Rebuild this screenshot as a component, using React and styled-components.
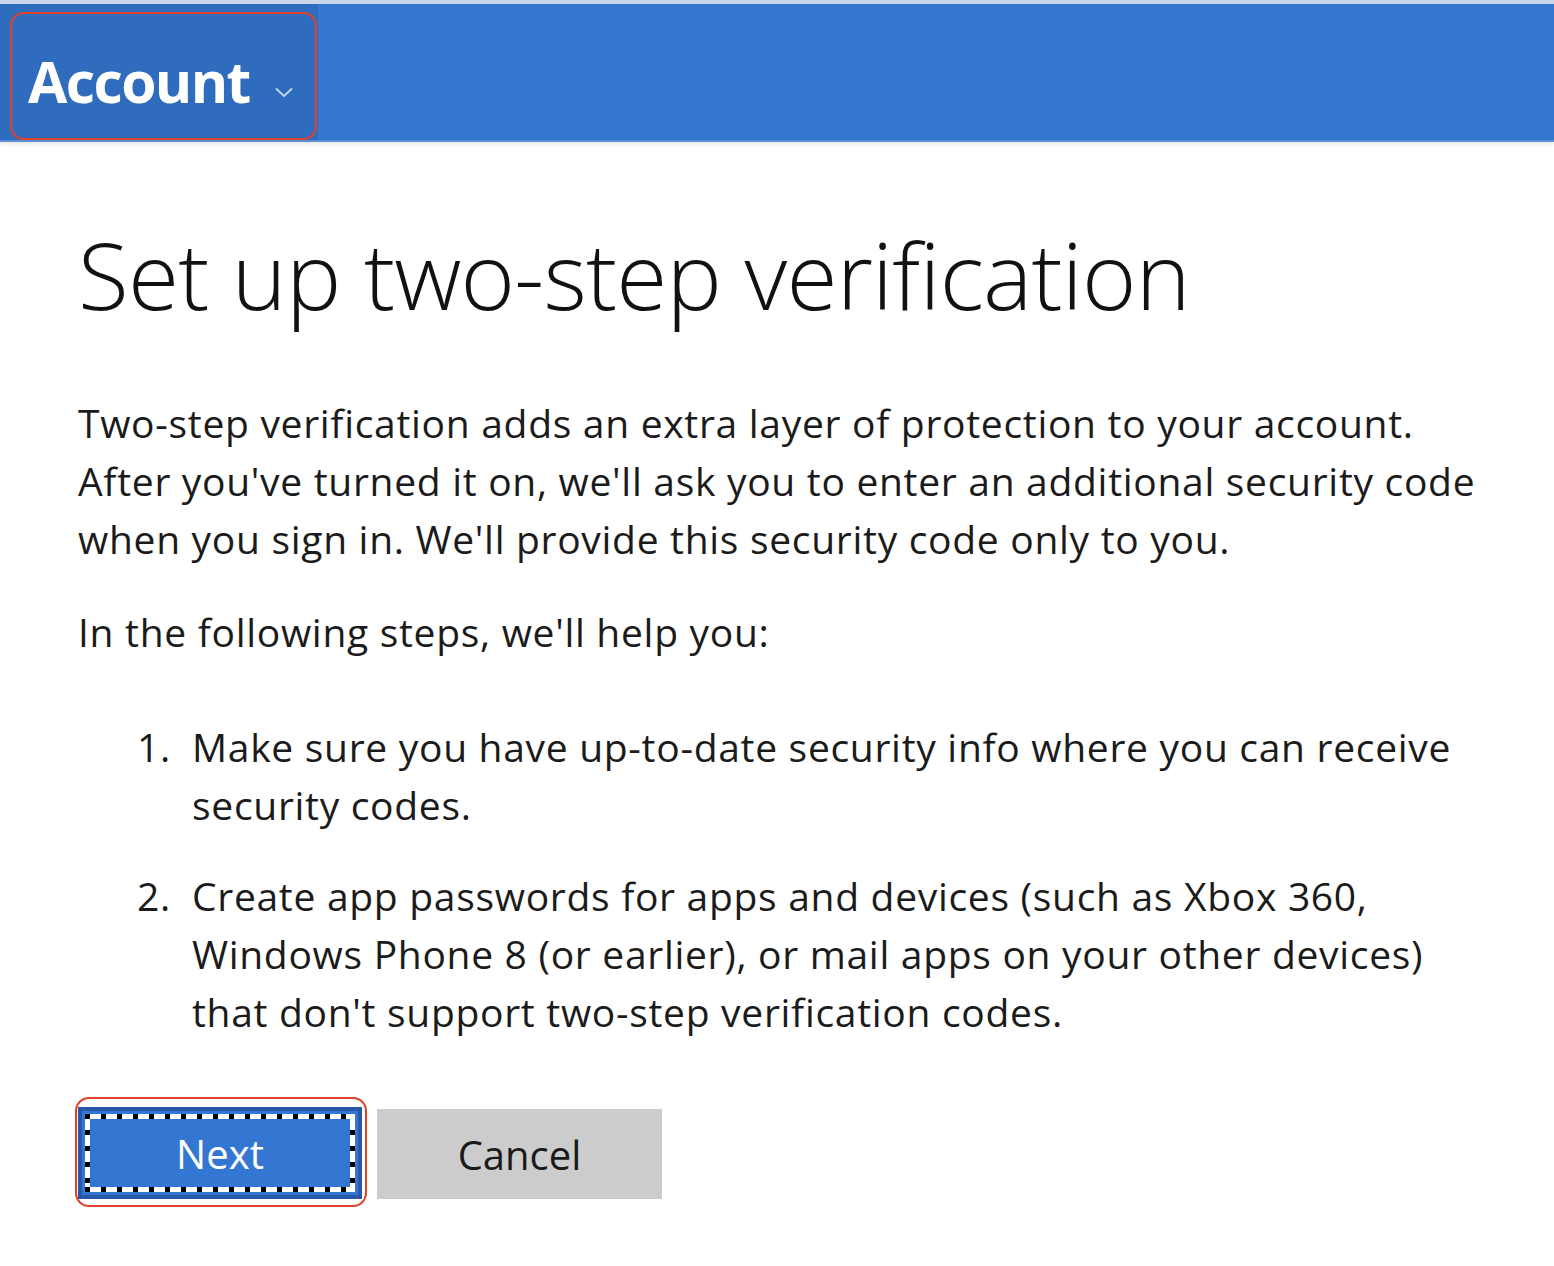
import React from "react";
import styled, { createGlobalStyle } from "styled-components";

const Global = createGlobalStyle`
  html, body {
    margin: 0;
    padding: 0;
    background: #ffffff;
  }
  body {
    font-family: "Open Sans", "Noto Sans", "Liberation Sans", sans-serif;
    color: #1a1a1a;
  }
`;

const Page = styled.div`
  width: 1554px;
  min-height: 1266px;
  border-top: 4px solid #c9d6ea;
  box-sizing: border-box;
`;

const Header = styled.header`
  height: 136px;
  background: #3477d1;
  display: flex;
  align-items: stretch;
  border-bottom: 2px solid #5b8fd8;
  box-shadow: 0 3px 3px rgba(0, 0, 0, 0.08);
`;

const AccountMenu = styled.div`
  position: relative;
  width: 318px;
  background: #2f6cbe;
  display: flex;
  align-items: flex-start;
  padding: 38px 0 0 28px;
  box-sizing: border-box;
  color: #ffffff;
`;

const AccountLabel = styled.span`
  font-family: "Open Sans", "Noto Sans", sans-serif;
  font-weight: 700;
  font-size: 57px;
  letter-spacing: -1.6px;
`;

const Chevron = styled.svg`
  margin-left: 24px;
  margin-top: 44px;
`;

const Highlight = styled.div`
  position: absolute;
  left: ${(p) => p.$left}px;
  top: ${(p) => p.$top}px;
  right: ${(p) => p.$right}px;
  bottom: ${(p) => p.$bottom}px;
  border: 2px solid #e0402a;
  border-radius: 14px;
  pointer-events: none;
`;

const Content = styled.main`
  padding: 72px 0 0 78px;
`;

const Title = styled.h1`
  margin: 0;
  font-family: "Open Sans", "Noto Sans", sans-serif;
  font-weight: 300;
  font-size: 93px;
  line-height: 120px;
  letter-spacing: -0.8px;
  color: #111111;
  white-space: nowrap;
`;

const Paragraph = styled.p`
  margin: ${(p) => p.$top}px 0 0;
  font-size: 39px;
  line-height: 58px;
  letter-spacing: 0.7px;
  color: #1b1b1b;
  white-space: nowrap;
`;

const Steps = styled.ol`
  list-style: none;
  margin: 57px 0 0;
  padding: 0 0 0 59px;
  display: flex;
  flex-direction: column;
  gap: 33px;
`;

const Step = styled.li`
  display: flex;
  font-size: 39px;
  line-height: 58px;
  letter-spacing: 0.7px;
  color: #1b1b1b;
  white-space: nowrap;
`;

const StepNumber = styled.span`
  width: 55px;
  flex-shrink: 0;
`;

const Buttons = styled.div`
  display: flex;
  gap: 15px;
  margin-top: 66px;
  align-items: flex-end;
`;

const ButtonWrap = styled.div`
  position: relative;
  display: flex;
`;

const Button = styled.button`
  position: relative;
  width: ${(p) => p.$width}px;
  height: ${(p) => p.$height}px;
  font-family: "Open Sans", "Noto Sans", sans-serif;
  font-size: 40px;
  padding: 0;
  cursor: pointer;
  box-sizing: border-box;
  border: ${(p) => (p.$primary ? "4px solid #2757a6" : "none")};
  background: ${(p) => (p.$primary ? "#3477d2" : "#cccccc")};
  color: ${(p) => (p.$primary ? "#ffffff" : "#1a1a1a")};

  ${(p) =>
    p.$primary &&
    `
    &::after {
      content: "";
      position: absolute;
      inset: 3px;
      background:
        repeating-linear-gradient(90deg, #000 0 5px, #fff 5px 16px) top left / 100% 5px no-repeat,
        repeating-linear-gradient(90deg, #000 0 5px, #fff 5px 16px) bottom left / 100% 5px no-repeat,
        repeating-linear-gradient(180deg, #000 0 5px, #fff 5px 16px) top left / 5px 100% no-repeat,
        repeating-linear-gradient(180deg, #000 0 5px, #fff 5px 16px) top right / 5px 100% no-repeat;
      pointer-events: none;
    }
  `}
`;

export default function App() {
  return (
    <>
      <Global />
      <Page>
        <Header>
          <AccountMenu>
            <AccountLabel>Account</AccountLabel>
            <Chevron width="20" height="12" viewBox="0 0 20 12">
              <path d="M2 2.5 L10 10 L18 2.5" fill="none" stroke="#c6d6f0" strokeWidth="1.8" />
            </Chevron>
            <Highlight $left={10} $top={8} $right={1} $bottom={0} />
          </AccountMenu>
        </Header>
        <Content>
          <Title>Set up two-step verification</Title>
          <Paragraph $top={60}>
            Two-step verification adds an extra layer of protection to your account.
            <br />
            After you've turned it on, we'll ask you to enter an additional security code
            <br />
            when you sign in. We'll provide this security code only to you.
          </Paragraph>
          <Paragraph $top={35}>In the following steps, we'll help you:</Paragraph>
          <Steps>
            <Step>
              <StepNumber>1.</StepNumber>
              <span>
                Make sure you have up-to-date security info where you can receive
                <br />
                security codes.
              </span>
            </Step>
            <Step>
              <StepNumber>2.</StepNumber>
              <span>
                Create app passwords for apps and devices (such as Xbox 360,
                <br />
                Windows Phone 8 (or earlier), or mail apps on your other devices)
                <br />
                that don't support two-step verification codes.
              </span>
            </Step>
          </Steps>
          <Buttons>
            <ButtonWrap>
              <Button $primary $width={284} $height={92}>Next</Button>
              <Highlight $left={-3} $top={-10} $right={-5} $bottom={-8} />
            </ButtonWrap>
            <Button $width={285} $height={90}>Cancel</Button>
          </Buttons>
        </Content>
      </Page>
    </>
  );
}
